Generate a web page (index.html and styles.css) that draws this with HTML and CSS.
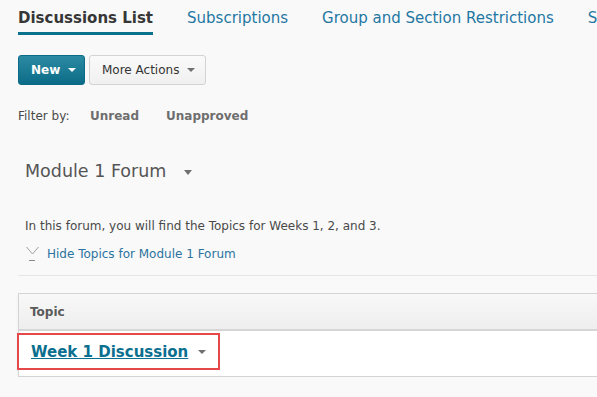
FILE: index.html
```html
<!DOCTYPE html>
<html lang="en">
  <head>
    <meta charset="UTF-8" />
    <title>Discussions List</title>
    <link rel="stylesheet" href="styles.css">
  </head>
  <body>
    <div class="tabs">
      <a class="tab active">Discussions List</a>
      <a class="tab">Subscriptions</a>
      <a class="tab">Group and Section Restrictions</a>
      <a class="tab">Settings</a>
    </div>

    <div class="toolbar">
      <button class="btn primary">New <span class="caret"></span></button>
      <button class="btn">More Actions <span class="caret"></span></button>
    </div>

    <div class="filter">
      <span class="filter-label">Filter by:</span>
      <span class="filter-item">Unread</span>
      <span class="filter-item">Unapproved</span>
    </div>

    <div class="forum">
      <h2 class="forum-title">Module 1 Forum <span class="caret big"></span></h2>
      <p class="forum-desc">In this forum, you will find the Topics for Weeks 1, 2, and 3.</p>
      <a class="toggle">
        <svg width="13" height="16" viewBox="0 0 13 16">
          <path d="M0.5 1 L6.5 8 L12.5 1" fill="none" stroke="#a0a0a0" stroke-width="1" />
          <path d="M3 14.5 H9" stroke="#8a8a8a" stroke-width="1" />
        </svg>
        Hide Topics for Module 1 Forum
      </a>
    </div>

    <div class="topics">
      <div class="topics-head">Topic</div>
      <div class="topics-row">
        <div class="highlight">
          <a class="topic-link">Week 1 Discussion</a>
          <span class="caret"></span>
        </div>
      </div>
    </div>
  </body>
</html>
```

FILE: styles.css
```css
* {
  margin: 0;
  padding: 0;
  box-sizing: border-box;
}
body {
  background-color: #f9f9f9;
  font-family: "DejaVu Sans", Verdana, sans-serif;
  color: #494949;
  padding-left: 18px;
  overflow: hidden;
  white-space: nowrap;
}
.tabs {
  display: flex;
  gap: 34px;
  height: 35px;
  padding-top: 8px;
  overflow: hidden;
}
.tab {
  font-size: 15px;
  color: #1f77a2;
  height: 27px;
  line-height: 20px;
}
.tab.active {
  font-weight: bold;
  color: #363636;
  border-bottom: 3px solid #0b728e;
}
.toolbar {
  display: flex;
  gap: 4px;
  margin-top: 20px;
}
.btn {
  font-family: inherit;
  font-size: 12px;
  height: 30px;
  padding: 0 10px 0 12px;
  border: 1px solid #d3d3d3;
  border-radius: 3px;
  background: linear-gradient(#fafafa, #f0f0f0);
  color: #333;
  display: flex;
  align-items: center;
  gap: 8px;
}
.btn.primary {
  background: linear-gradient(#2c8aa3, #0c6c87);
  border-color: #0c6c87;
  color: #fff;
  font-weight: bold;
  width: 67px;
}
.caret {
  display: inline-block;
  width: 0;
  height: 0;
  border-left: 4px solid transparent;
  border-right: 4px solid transparent;
  border-top: 4px solid #707070;
}
.btn.primary .caret {
  border-top-color: #fff;
}
.caret.big {
  border-top-width: 5px;
  margin-left: 12px;
  vertical-align: middle;
}
.filter {
  margin-top: 23px;
  font-size: 12px;
  display: flex;
  height: 16px;
  align-items: center;
}
.filter-label {
  color: #494949;
  width: 72px;
}
.filter-item {
  font-weight: bold;
  color: #6e6e6e;
  margin-right: 27px;
}
.forum {
  padding-left: 7px;
  border-bottom: 1px solid #e6e6e6;
  padding-bottom: 13px;
  margin-top: 35px;
}
.forum-title {
  font-size: 17.5px;
  font-weight: normal;
  color: #555;
  height: 24px;
  line-height: 24px;
}
.forum-desc {
  font-size: 12px;
  margin-top: 35px;
  line-height: 16px;
}
.toggle {
  display: flex;
  align-items: center;
  gap: 8px;
  margin-top: 12px;
  font-size: 12px;
  color: #2b73a0;
  line-height: 16px;
  padding-left: 1px;
}
.topics {
  margin-top: 17px;
  border: 1px solid #d4d4d4;
  border-right: none;
  box-shadow: 0 2px 3px rgba(0, 0, 0, 0.05);
}
.topics-head {
  height: 37px;
  line-height: 36px;
  padding-left: 11px;
  font-size: 12px;
  font-weight: bold;
  color: #5a5a5a;
  background: linear-gradient(#f8f8f8, #eeeeee);
  border-bottom: 2px solid #d6d6d6;
}
.topics-row {
  background-color: #fff;
  height: 45px;
  padding-top: 2px;
}
.highlight {
  display: inline-flex;
  align-items: center;
  gap: 10px;
  margin-left: -2px;
  width: 203px;
  height: 37px;
  padding-left: 12px;
  border: 2px solid #e5484a;
}
.topic-link {
  font-size: 15px;
  font-weight: bold;
  color: #0b6f8f;
  text-decoration: underline;
}
```
